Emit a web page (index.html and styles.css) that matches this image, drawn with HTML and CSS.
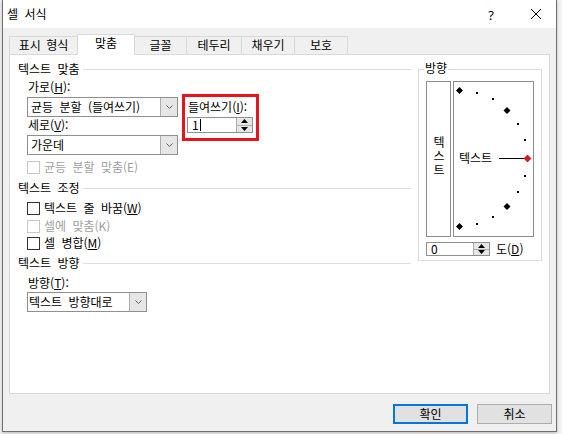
FILE: index.html
```html
<!DOCTYPE html>
<html lang="ko">
<head>
<meta charset="utf-8">
<title>셀 서식</title>
<link rel="stylesheet" href="styles.css">
</head>
<body>
<div class="window">
  <div class="titlebar">
    <span class="title">셀 서식</span>
    <span class="help">?</span>
    <svg class="close" width="10" height="10" viewBox="0 0 10 10"><path d="M0 0L10 10M10 0L0 10" stroke="#000" stroke-width="1"/></svg>
  </div>
  <div class="client">
    <div class="tabs">
      <div class="tab w1">표시 형식</div>
      <div class="tab w2 active">맞춤</div>
      <div class="tab w3">글꼴</div>
      <div class="tab w4">테두리</div>
      <div class="tab w5">채우기</div>
      <div class="tab w6">보호</div>
    </div>
    <div class="panel">
      <div class="left">
        <div class="group-head"><span>텍스트 맞춤</span><i class="rule"></i></div>
        <div class="align-row">
          <div class="align-col">
            <div class="label">가로(<u>H</u>):</div>
            <div class="combo c-wide"><span class="combo-text">균등 분할 (들여쓰기)</span><span class="combo-btn"><svg width="7" height="4" viewBox="0 0 7 4"><path d="M0.5 0.5L3.5 3.5L6.5 0.5" fill="none" stroke="#606060" stroke-width="1"/></svg></span></div>
            <div class="label gap1">세로(<u>V</u>):</div>
            <div class="combo c-wide"><span class="combo-text">가운데</span><span class="combo-btn"><svg width="7" height="4" viewBox="0 0 7 4"><path d="M0.5 0.5L3.5 3.5L6.5 0.5" fill="none" stroke="#606060" stroke-width="1"/></svg></span></div>
          </div>
          <div class="indent-box">
            <div class="label">들여쓰기(<u>I</u>):</div>
            <div class="spin s-indent">
              <span class="spin-text">1<i class="caret"></i></span>
              <span class="spin-btns">
                <span class="spin-half"><svg width="7" height="4" viewBox="0 0 7 4"><path d="M3.5 0L7 4H0Z" fill="#000"/></svg></span>
                <span class="spin-half"><svg width="7" height="4" viewBox="0 0 7 4"><path d="M0 0H7L3.5 4Z" fill="#000"/></svg></span>
              </span>
            </div>
          </div>
        </div>
        <div class="check disabled first"><span class="box"></span><span>균등 분할 맞춤(E)</span></div>
        <div class="group-head gh2"><span>텍스트 조정</span><i class="rule"></i></div>
        <div class="check c-a"><span class="box"></span><span>텍스트 줄 바꿈(<u>W</u>)</span></div>
        <div class="check disabled c-b"><span class="box"></span><span>셀에 맞춤(K)</span></div>
        <div class="check c-c"><span class="box"></span><span>셀 병합(<u>M</u>)</span></div>
        <div class="group-head gh3"><span>텍스트 방향</span><i class="rule"></i></div>
        <div class="label gap-dir">방향(<u>T</u>):</div>
        <div class="combo c-dir"><span class="combo-text">텍스트 방향대로</span><span class="combo-btn"><svg width="7" height="4" viewBox="0 0 7 4"><path d="M0.5 0.5L3.5 3.5L6.5 0.5" fill="none" stroke="#606060" stroke-width="1"/></svg></span></div>
      </div>
      <div class="dirbox">
        <div class="dirbox-title">방향</div>
        <div class="dir-row">
          <div class="vert-box"><span class="vert-text">텍스트</span></div>
          <div class="dial">
            <svg class="dial-svg" width="79" height="154" viewBox="0 0 79 154">
              <g fill="#000">
                <path d="M5.5 5L9 8.5L5.5 12L2 8.5Z"/>
                <rect x="22" y="10" width="2" height="2"/>
                <rect x="38" y="16" width="2" height="2"/>
                <path d="M53 25L56.5 28.5L53 32L49.5 28.5Z"/>
                <rect x="63" y="41" width="2" height="2"/>
                <rect x="70" y="57" width="2" height="2"/>
                <rect x="70" y="93" width="2" height="2"/>
                <rect x="63" y="109" width="2" height="2"/>
                <path d="M53 121L56.5 124.5L53 128L49.5 124.5Z"/>
                <rect x="38" y="134" width="2" height="2"/>
                <rect x="22" y="141" width="2" height="2"/>
                <path d="M5.5 141L9 144.5L5.5 148L2 144.5Z"/>
              </g>
              <path d="M45 76.5H70" stroke="#000" stroke-width="1"/>
              <path d="M73.5 73L77 76.5L73.5 80L70 76.5Z" fill="#e8141c" stroke="#9a0000" stroke-width="0.6"/>
            </svg>
            <span class="dial-text">텍스트</span>
          </div>
        </div>
        <div class="deg-row">
          <div class="spin s-deg">
            <span class="spin-text">0</span>
            <span class="spin-btns">
              <span class="spin-half"><svg width="7" height="4" viewBox="0 0 7 4"><path d="M3.5 0L7 4H0Z" fill="#000"/></svg></span>
              <span class="spin-half"><svg width="7" height="4" viewBox="0 0 7 4"><path d="M0 0H7L3.5 4Z" fill="#000"/></svg></span>
            </span>
          </div>
          <span class="deg-label">도(<u>D</u>)</span>
        </div>
      </div>
    </div>
    <div class="buttons">
      <div class="btn default">확인</div>
      <div class="btn">취소</div>
    </div>
  </div>
</div>
</body>
</html>
```

FILE: styles.css
```css
* { box-sizing: border-box; }
html, body { margin: 0; padding: 0; }
body {
  width: 562px;
  height: 434px;
  overflow: hidden;
  background: #f3f3f3;
  font-family: "Noto Sans CJK KR", "Noto Sans", sans-serif;
  font-size: 12px;
  line-height: 14px;
  color: #000;
  word-spacing: 3px;
}
u { text-decoration: underline; text-underline-offset: 1px; }

.window {
  margin-left: 2px;
  width: 555px;
  height: 432px;
  border: 1px solid #707070;
  border-top: none;
  background: #f0f0f0;
  box-shadow: 0 1px 3px rgba(0,0,0,0.25);
  display: flex;
  flex-direction: column;
}

.titlebar {
  height: 28px;
  flex: none;
  background: #fff;
  display: flex;
  align-items: center;
  padding-left: 4px;
}
.title { flex: 1; }
.help {
  width: 10px;
  text-align: center;
  font-family: "Noto Sans", sans-serif;
  font-size: 13px;
  margin-top: 1px;
  margin-right: 35px;
}
.close { margin-right: 15px; }

.client {
  flex: 1;
  padding-left: 6px;
}

.tabs {
  margin-top: 8px;
  height: 18px;
  display: flex;
  align-items: flex-end;
}
.tab {
  height: 18px;
  margin-right: -1px;
  border: 1px solid #d9d9d9;
  border-bottom: none;
  background: #f0f0f0;
  text-align: center;
  line-height: 16px;
  word-spacing: 2px;
}
.tab.active {
  position: relative;
  z-index: 1;
  height: 21px;
  margin-bottom: -1px;
  background: #fff;
}
.w1 { width: 69px; }
.w2 { width: 58px; }
.w3 { width: 53px; }
.w4 { width: 56px; }
.w5 { width: 54px; }
.w6 { width: 54px; }

.panel {
  width: 541px;
  height: 340px;
  border: 1px solid #d9d9d9;
  background: #fff;
  display: flex;
  align-items: flex-start;
  padding: 7px 0 0 8px;
}

.left {
  width: 393px;
  display: flex;
  flex-direction: column;
}

.group-head {
  height: 14px;
  display: flex;
  align-items: center;
}
.rule {
  flex: 1;
  height: 1px;
  margin-left: 3px;
  background: #dcdcdc;
}
.gh2 { margin-top: 7px; }
.gh3 { margin-top: 6px; }

.label {
  height: 14px;
  padding-left: 10px;
  white-space: nowrap;
}
.gap1 { margin-top: 1px; }
.gap-dir { margin-top: 6px; }

.align-row {
  margin-top: 4px;
  display: flex;
  align-items: flex-start;
}
.align-col {
  display: flex;
  flex-direction: column;
}
.align-col .combo { margin-left: 9px; margin-top: 3px; }

.combo {
  height: 20px;
  border: 1px solid #8f8f8f;
  background: #fff;
  display: flex;
}
.c-wide { width: 151px; }
.c-dir { width: 120px; margin-left: 9px; margin-top: 2px; }
.combo-text {
  flex: 1;
  padding-left: 3px;
  line-height: 18px;
  white-space: nowrap;
  overflow: hidden;
}
.c-dir .combo-text { padding-left: 1px; }
.combo-btn {
  width: 17px;
  flex: none;
  background: #e6e6e6;
  border-left: 1px solid #adadad;
  display: flex;
  align-items: center;
  justify-content: center;
}

.indent-box {
  margin-left: 4px;
  margin-top: 14px;
  width: 77px;
  height: 47px;
  border: 3px solid #e8141c;
  padding-top: 3px;
}
.indent-box .label { padding-left: 3px; }

.spin {
  display: flex;
  border: 1px solid #8f8f8f;
  background: #fff;
}
.s-indent {
  width: 66px;
  height: 16px;
  margin-left: 2px;
  margin-top: 3px;
}
.s-deg {
  width: 64px;
  height: 14px;
}
.spin-text {
  flex: 1;
  padding-left: 4px;
  line-height: 14px;
  display: flex;
  align-items: center;
}
.s-deg .spin-text { line-height: 12px; }
.caret {
  display: inline-block;
  width: 1px;
  height: 12px;
  margin-left: 1px;
  background: #000;
}
.spin-btns {
  width: 16px;
  flex: none;
  display: flex;
  flex-direction: column;
  border-left: 1px solid #adadad;
  background: #e6e6e6;
}
.spin-half {
  flex: 1;
  display: flex;
  align-items: center;
  justify-content: center;
}
.spin-half + .spin-half { border-top: 1px solid #adadad; }

.check {
  height: 14px;
  display: flex;
  align-items: center;
  padding-left: 9px;
  white-space: nowrap;
}
.check .box {
  width: 13px;
  height: 13px;
  border: 1px solid #333;
  background: #fff;
  margin-right: 4px;
  flex: none;
}
.check.disabled { color: #a0a0a0; }
.check.disabled .box { border-color: #c8c8c8; }
.first { margin-top: 5px; }
.c-a { margin-top: 6px; }
.c-b { margin-top: 4px; }
.c-c { margin-top: 3px; }

.dirbox {
  margin-left: 7px;
  margin-top: 7px;
  width: 124px;
  height: 192px;
  border: 1px solid #dcdcdc;
}
.dirbox-title {
  margin-top: -9px;
  margin-left: 5px;
  padding: 0 1px;
  width: max-content;
  background: #fff;
}
.dir-row {
  margin-top: 6px;
  margin-left: 7px;
  display: flex;
  gap: 2px;
}
.vert-box {
  width: 25px;
  height: 156px;
  border: 1px solid #8c8c8c;
  display: flex;
  align-items: center;
  justify-content: center;
  padding-bottom: 4px;
}
.vert-text {
  writing-mode: vertical-rl;
  text-orientation: upright;
  letter-spacing: 2px;
  line-height: 14px;
}
.dial {
  position: relative;
  width: 81px;
  height: 156px;
  border: 1px solid #8c8c8c;
}
.dial-svg { display: block; }
.dial-text {
  position: absolute;
  left: 5px;
  top: 69px;
  word-spacing: 0;
}

.deg-row {
  margin-top: 5px;
  margin-left: 7px;
  display: flex;
  align-items: center;
}
.deg-label { margin-left: 6px; }

.buttons {
  margin-top: 10px;
  display: flex;
  justify-content: flex-end;
  gap: 9px;
  padding-right: 4px;
}
.btn {
  width: 75px;
  height: 20px;
  border: 1px solid #adadad;
  background: #e1e1e1;
  text-align: center;
  line-height: 18px;
}
.btn.default {
  border: 2px solid #0078d7;
  line-height: 16px;
}
```
